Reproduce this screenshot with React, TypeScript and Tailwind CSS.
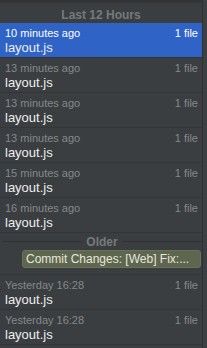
const recent = [
  { when: "10 minutes ago", selected: true },
  { when: "13 minutes ago" },
  { when: "13 minutes ago" },
  { when: "13 minutes ago" },
  { when: "15 minutes ago" },
  { when: "16 minutes ago" },
];

const older = [{ when: "Yesterday 16:28" }, { when: "Yesterday 16:28" }];

function Row({ when, selected }: { when: string; selected?: boolean }) {
  return (
    <div
      className={
        "flex flex-col pt-[3px] pl-[5px] pr-[4px] border-b border-[#333537] " +
        (selected ? "bg-[#2f63c6]" : "")
      }
    >
      <div
        className={
          "flex justify-between h-[14px] leading-[14px] text-[11px] " +
          (selected ? "text-white" : "text-[#85888b]")
        }
      >
        <span>{when}</span>
        <span>1 file</span>
      </div>
      <div className="h-[17px] leading-[16px] text-[13px] text-[#eeeeee]">layout.js</div>
    </div>
  );
}

export default function App() {
  return (
    <div
      className="w-[207px] h-[348px] overflow-hidden bg-[#3b3e40] flex"
      style={{ fontFamily: '"Liberation Sans", Arial, sans-serif' }}
    >
      <div className="w-[203px] flex flex-col border-r border-[#2f3133]">
        {/* Last 12 Hours */}
        <div className="h-[23px] pt-[3px] text-center text-[12px] font-bold text-[#76797c] border-t-[3px] border-[#333537]">
          Last 12 Hours
        </div>
        {recent.map((r, i) => (
          <Row key={i} when={r.when} selected={r.selected} />
        ))}

        {/* Older */}
        <div className="h-[17px] flex items-center gap-[4px] pl-[2px]">
          <div className="flex-1 h-px bg-[#2f3133]" />
          <span className="text-[12px] font-bold text-[#76797c] leading-[14px]">Older</span>
          <div className="flex-1 h-px bg-[#2f3133]" />
        </div>
        <div className="flex pl-[22px] pr-[1px] h-[18px]">
          <div className="flex-1 rounded-[3px] bg-[#5e6650] border border-[#6a7159] text-[12px] leading-[16px] text-[#e6e8da] pl-[3px] truncate">
            Commit Changes: [Web] Fix:...
          </div>
        </div>
        <div className="h-[7px] border-b border-[#333537]" />
        {older.map((r, i) => (
          <Row key={i} when={r.when} />
        ))}
      </div>
      <div className="flex-1 bg-[#3d4042]" />
    </div>
  );
}
